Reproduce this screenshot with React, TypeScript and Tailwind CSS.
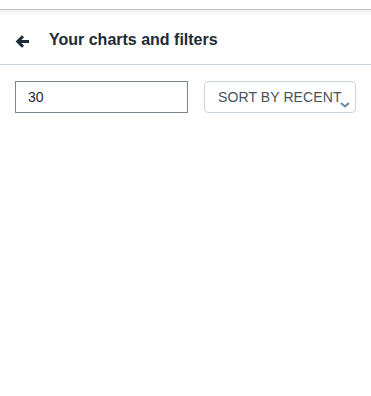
export default function App() {
  return (
    <div className="h-[396px] w-[371px] bg-white font-['Liberation_Sans',Arial,sans-serif]">
      <div className="h-[9px] bg-white" />
      <div className="h-px bg-[#c4c4c8]" />
      <div className="h-[6px] bg-gradient-to-b from-[#f0eff3] to-white" />
      <header className="flex h-[49px] items-center border-b border-[#c9d6dc] pl-[15px]">
        <svg width="15" height="13" viewBox="0 0 15 13" className="mt-[2px] text-[#1d2b36]">
          <path
            d="M14 6.5H3.5M8 1.2L2.7 6.5L8 11.8"
            fill="none"
            stroke="currentColor"
            strokeWidth="3"
            strokeLinejoin="miter"
          />
        </svg>
        <h1 className="ml-[19px] text-[16px] font-bold text-[#1d2b36]">Your charts and filters</h1>
      </header>
      <div className="flex gap-[16px] px-[15px] pt-[16px]">
        <input
          defaultValue="30"
          className="h-[32px] w-[173px] border border-[#7b858e] px-[12px] text-[14px] text-[#1d2b36] outline-none"
        />
        <div className="relative flex h-[32px] w-[153px] items-center rounded-[4px] border border-[#c9d6dc] pl-[13px] text-[14px] tracking-[0.1px] text-[#47525c]">
          SORT BY RECENT
          <svg width="10" height="6" viewBox="0 0 10 6" className="absolute right-[5px] top-[20px] text-[#6b879b]">
            <path d="M1 1L5 4.5L9 1" fill="none" stroke="currentColor" strokeWidth="2" />
          </svg>
        </div>
      </div>
    </div>
  );
}
